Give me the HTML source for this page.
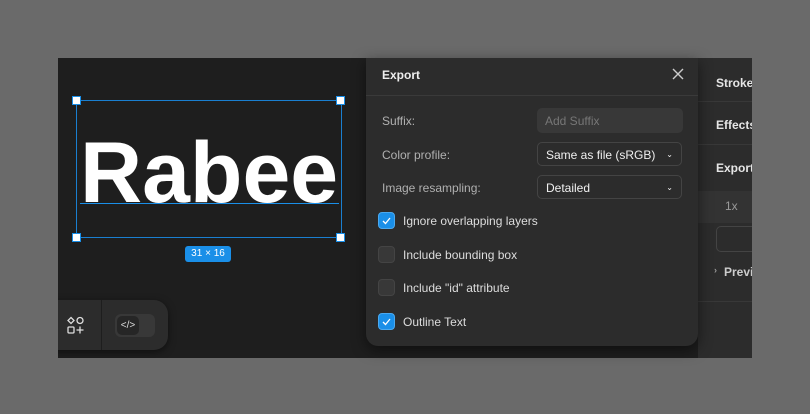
<!DOCTYPE html>
<html><head><style>
body{margin:0;width:810px;height:414px;background:#6a6a6a;font-family:"Liberation Sans",sans-serif;position:relative;overflow:hidden}
.a{position:absolute}
.main{left:58px;top:58px;width:694px;height:300px;background:#1e1e1e;overflow:hidden}
.rp{left:698px;top:58px;width:54px;height:300px;background:#2c2c2c;color:#e6e6e6;font-size:12px;font-weight:bold;overflow:hidden}
.dlg{left:366px;top:58px;width:332px;height:288px;background:#2c2c2c;border-radius:0 0 12px 12px;box-shadow:0 4px 14px rgba(0,0,0,.5);color:#ddd;font-size:12px}
.lbl{color:#b0b0b0}
.cb{width:15px;height:15px;border-radius:4px;background:#383838;border:1px solid #444}
.cb.on{background:#1a8fe8;border-color:#4aa9f0}
.sel{left:171px;width:145px;height:24px;border:1px solid #444;border-radius:5px;box-sizing:border-box;padding:5px 8px;color:#f0f0f0}
.h{width:7px;height:7px;background:#fff;border:1px solid #1a8fe8}
</style></head><body>
<div class="a main">
 <div class="a" style="left:18px;top:42px;width:264px;height:136px;border:1px solid #1a7fd0"></div>
 <div class="a" style="left:22px;top:65px;font-size:86px;font-weight:bold;color:#fff;letter-spacing:0px;line-height:100px">Rabee</div>
 <div class="a" style="left:22px;top:145px;width:259px;height:1px;background:#1a8fe8"></div>
 <div class="a h" style="left:14px;top:38px"></div><div class="a h" style="left:278px;top:38px"></div>
 <div class="a h" style="left:14px;top:175px"></div><div class="a h" style="left:278px;top:175px"></div>
 <div class="a" style="left:127px;top:188px;width:46px;height:16px;background:#1a8fe8;border-radius:3px;color:#fff;font-size:10px;text-align:center;line-height:16px">31 × 16</div>
 <div class="a" style="left:-10px;top:242px;width:120px;height:50px;background:#2c2c2c;border-radius:0 14px 14px 0;box-shadow:0 2px 8px rgba(0,0,0,.5)"></div>
 <div class="a" style="left:43px;top:242px;width:1px;height:50px;background:#1e1e1e"></div>
 <svg class="a" style="left:8px;top:258px" width="20" height="20" viewBox="0 0 20 20" fill="none" stroke="#ddd" stroke-width="1.3"><path d="M5 1.5L8 4.5L5 7.5L2 4.5Z"/><circle cx="14" cy="4.5" r="3"/><rect x="2" y="11" width="6" height="6" rx="1"/><path d="M14 10.5v7M10.5 14h7"/></svg>
 <div class="a" style="left:57px;top:256px;width:40px;height:23px;background:#383838;border-radius:6px"></div>
 <div class="a" style="left:59px;top:258px;width:22px;height:19px;background:#262626;border-radius:5px;color:#ddd;font-size:10px;text-align:center;line-height:19px">&lt;/&gt;</div>
</div>
<div class="a rp">
 <div class="a" style="left:18px;top:18px">Stroke</div>
 <div class="a" style="left:0;top:43px;width:54px;height:1px;background:#383838"></div>
 <div class="a" style="left:18px;top:60px">Effects</div>
 <div class="a" style="left:0;top:86px;width:54px;height:1px;background:#383838"></div>
 <div class="a" style="left:18px;top:103px">Export</div>
 <div class="a" style="left:0;top:133px;width:54px;height:32px;background:#333"></div>
 <div class="a" style="left:27px;top:141px;color:#999;font-weight:normal">1x</div>
 <div class="a" style="left:18px;top:168px;width:40px;height:24px;border:1px solid #444;border-radius:5px"></div>
 <div class="a" style="left:16px;top:207px;color:#999;font-size:9px">›</div>
 <div class="a" style="left:26px;top:207px;color:#ccc">Previ</div>
 <div class="a" style="left:0;top:243px;width:54px;height:1px;background:#383838"></div>
</div>
<div class="a dlg">
 <div class="a" style="left:16px;top:10px;font-weight:bold;color:#eee">Export</div>
 <svg class="a" style="left:306px;top:10px" width="12" height="12" viewBox="0 0 12 12" stroke="#ccc" stroke-width="1.4"><path d="M1 1L11 11M11 1L1 11"/></svg>
 <div class="a" style="left:0;top:37px;width:332px;height:1px;background:#3a3a3a"></div>
 <div class="a lbl" style="left:16px;top:56px">Suffix:</div>
 <div class="a" style="left:171px;top:50px;width:146px;height:25px;background:#383838;border-radius:5px;color:#777;padding:6px 8px;box-sizing:border-box">Add Suffix</div>
 <div class="a lbl" style="left:16px;top:90px">Color profile:</div>
 <div class="a sel" style="top:84px">Same as file (sRGB)<span style="position:absolute;right:8px;font-size:8px;top:7px">⌄</span></div>
 <div class="a lbl" style="left:16px;top:123px">Image resampling:</div>
 <div class="a sel" style="top:117px">Detailed<span style="position:absolute;right:8px;font-size:8px;top:7px">⌄</span></div>
 <div class="a cb on" style="left:12px;top:154px"><svg width="15" height="15"><path d="M4 8l2.5 2.5L11 5" stroke="#fff" stroke-width="1.3" fill="none"/></svg></div>
 <div class="a" style="left:37px;top:156px">Ignore overlapping layers</div>
 <div class="a cb" style="left:12px;top:188px"></div>
 <div class="a" style="left:37px;top:190px">Include bounding box</div>
 <div class="a cb" style="left:12px;top:221px"></div>
 <div class="a" style="left:37px;top:223px">Include "id" attribute</div>
 <div class="a cb on" style="left:12px;top:255px"><svg width="15" height="15"><path d="M4 8l2.5 2.5L11 5" stroke="#fff" stroke-width="1.3" fill="none"/></svg></div>
 <div class="a" style="left:37px;top:257px">Outline Text</div>
</div>
</body></html>
